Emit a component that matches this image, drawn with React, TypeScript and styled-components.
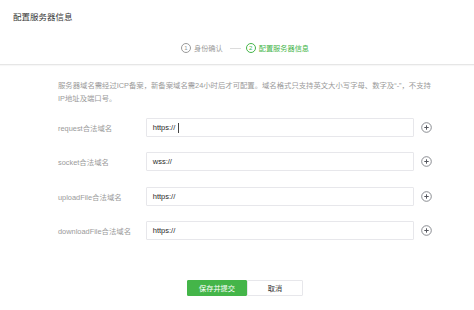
import styled, { createGlobalStyle } from 'styled-components';

const fields = [
  { label: 'request合法域名', value: 'https://', focused: true },
  { label: 'socket合法域名', value: 'wss://' },
  { label: 'uploadFile合法域名', value: 'https://' },
  { label: 'downloadFile合法域名', value: 'https://' },
];

function PlusIcon() {
  return (
    <svg width="11" height="11" viewBox="0 0 11 11">
      <circle cx="5.5" cy="5.5" r="4.8" fill="none" stroke="#7d7f86" strokeWidth="0.9" />
      <path d="M5.5 3.3v4.4M3.3 5.5h4.4" stroke="#55575e" strokeWidth="1" />
    </svg>
  );
}

export default function App() {
  return (
    <Page>
      <GlobalStyle />
      <Title>配置服务器信息</Title>
      <StepsBar>
        <Steps>
          <Step>
            <StepNum>1</StepNum>
            身份确认
          </Step>
          <StepLine />
          <Step active>
            <StepNum active>2</StepNum>
            配置服务器信息
          </Step>
        </Steps>
      </StepsBar>
      <Content>
        <Tip>
          服务器域名需经过ICP备案，新备案域名需24小时后才可配置。域名格式只支持英文大小写字母、数字及“-”，不支持IP地址及端口号。
        </Tip>
        <Form>
          {fields.map(f => (
            <Row key={f.label}>
              <Label>{f.label}</Label>
              <Input>
                {f.value}
                {f.focused && <Caret />}
              </Input>
              <AddButton>
                <PlusIcon />
              </AddButton>
            </Row>
          ))}
        </Form>
        <Actions>
          <Button primary>保存并提交</Button>
          <Button>取消</Button>
        </Actions>
      </Content>
    </Page>
  );
}

const GlobalStyle = createGlobalStyle`
  html, body {
    margin: 0;
    padding: 0;
    background: #ffffff;
  }
  body {
    font-family: "Liberation Sans", "Noto Sans CJK SC", sans-serif;
  }
`;

const Page = styled.div`
  width: 474px;
  height: 310px;
  background: #ffffff;
  overflow: hidden;
`;

const Title = styled.div`
  height: 34px;
  line-height: 34px;
  padding-left: 13px;
  font-size: 8.5px;
  color: #353535;
`;

const StepsBar = styled.div`
  height: 30px;
  border-bottom: 1px solid #e6e6e6;
  box-shadow: 0 1px 1px rgba(0, 0, 0, 0.03);
  padding-left: 58px;
`;

const Steps = styled.div`
  width: 374px;
  height: 100%;
  display: flex;
  align-items: center;
  justify-content: center;
  padding-bottom: 2px;
  box-sizing: border-box;
`;

const Step = styled.div<{ active?: boolean }>`
  display: flex;
  align-items: center;
  font-size: 7.2px;
  color: ${p => (p.active ? '#44b549' : '#9a9a9a')};
`;

const StepNum = styled.span<{ active?: boolean }>`
  width: 8px;
  height: 8px;
  border: 0.8px solid ${p => (p.active ? '#44b549' : '#9a9a9a')};
  border-radius: 50%;
  display: flex;
  align-items: center;
  justify-content: center;
  font-size: 6px;
  margin-right: 3px;
`;

const StepLine = styled.span`
  width: 11px;
  height: 1px;
  background: #dcdcdc;
  margin: 0 5px 0 7px;
`;

const Content = styled.div`
  margin-left: 58px;
  width: 374px;
`;

const Tip = styled.p`
  margin: 15px 0 0;
  font-size: 7.35px;
  line-height: 12.5px;
  color: #9a9a9a;
`;

const Form = styled.div`
  margin-top: 13px;
  display: flex;
  flex-direction: column;
  gap: 15.3px;
`;

const Row = styled.div`
  display: flex;
  align-items: center;
  height: 19px;
`;

const Label = styled.div`
  width: 88px;
  font-size: 7.4px;
  color: #9a9a9a;
`;

const Input = styled.div`
  width: 269px;
  height: 19px;
  box-sizing: border-box;
  border: 1px solid #e7e7eb;
  border-radius: 1px;
  padding-left: 6px;
  display: flex;
  align-items: center;
  font-size: 7.5px;
  color: #2a2a2a;
`;

const Caret = styled.span`
  width: 1px;
  height: 10px;
  background: #444;
  margin-left: 3px;
`;

const AddButton = styled.div`
  margin-left: 7px;
  display: flex;
  align-items: center;
`;

const Actions = styled.div`
  margin-top: 40px;
  display: flex;
  justify-content: center;
`;

const Button = styled.div<{ primary?: boolean }>`
  width: ${p => (p.primary ? '60px' : '56px')};
  height: 16px;
  box-sizing: border-box;
  display: flex;
  align-items: center;
  justify-content: center;
  font-size: 7.2px;
  border-radius: 1px;
  color: ${p => (p.primary ? '#ffffff' : '#353535')};
  background: ${p => (p.primary ? '#44b549' : '#ffffff')};
  border: 1px solid ${p => (p.primary ? '#44b549' : '#e7e7eb')};
`;
